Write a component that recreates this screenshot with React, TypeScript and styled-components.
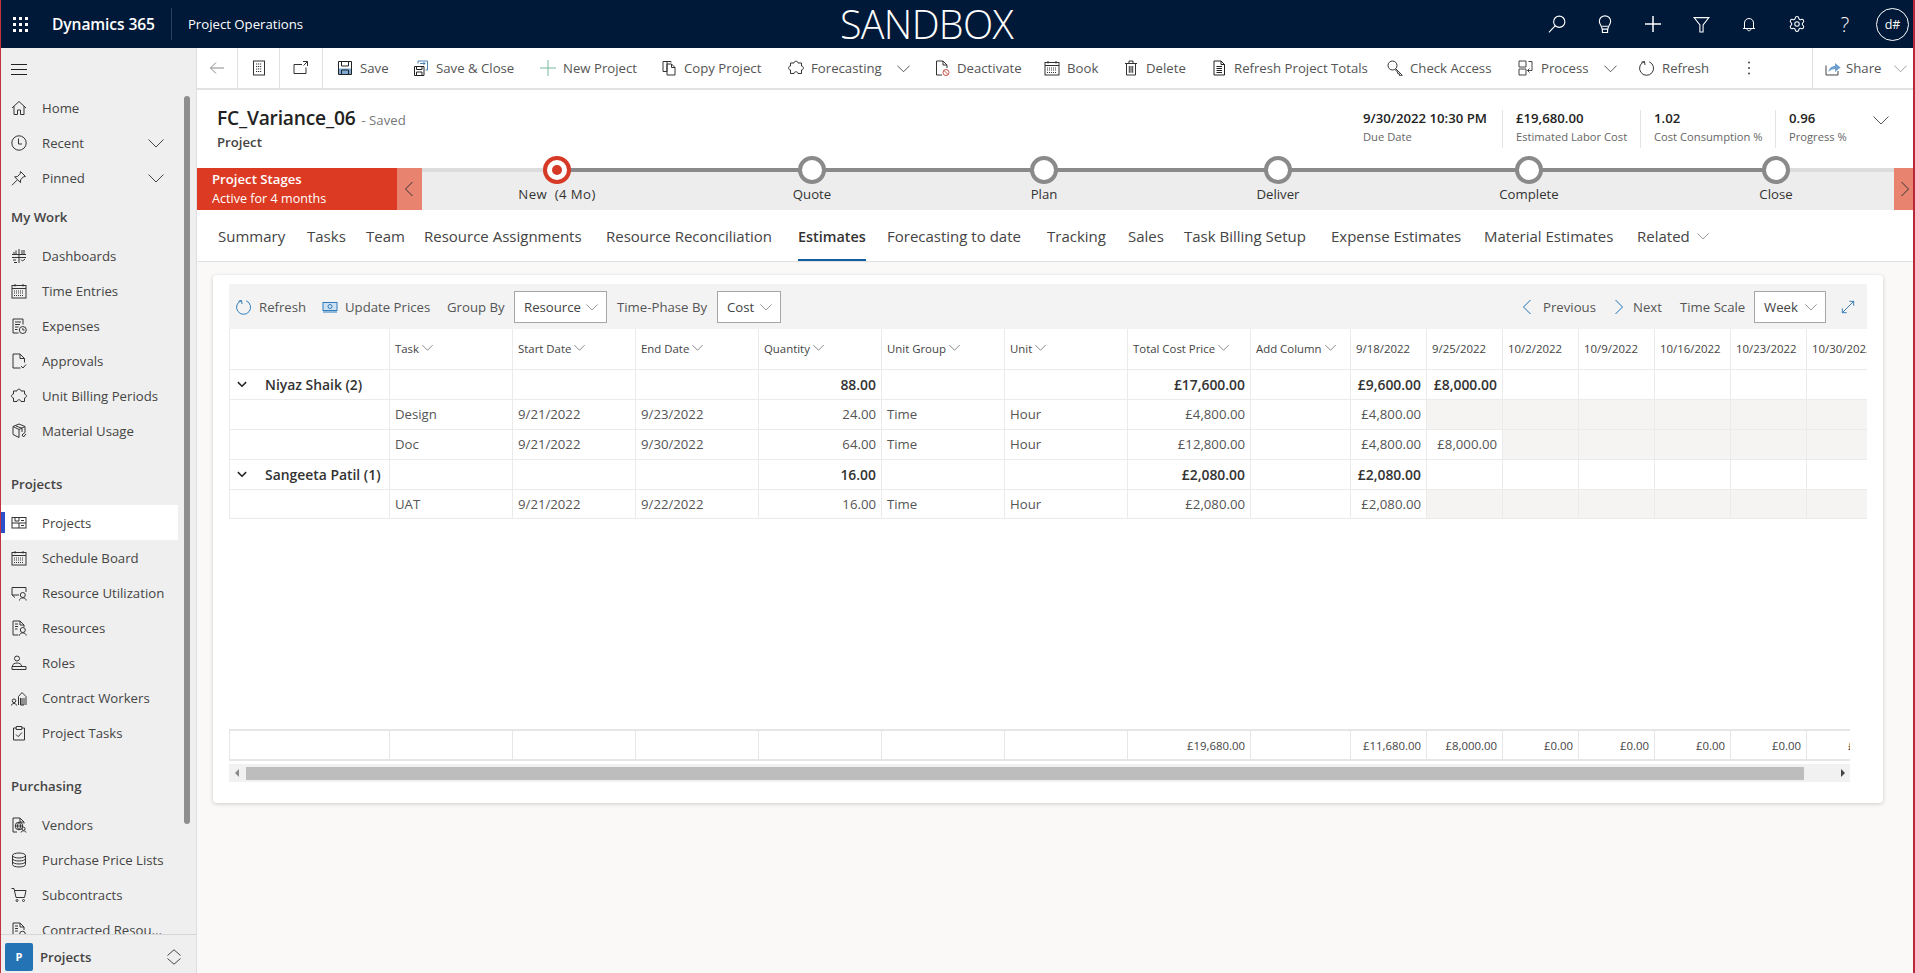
import { ReactNode } from 'react'
import { createGlobalStyle, styled } from 'styled-components'
import { Settings } from 'lucide-react'

const GlobalStyle = createGlobalStyle`
  html, body {
    margin: 0;
    padding: 0;
    height: 100%;
    overflow: hidden;
    background: #faf9f8;
    font-family: "Open Sans", "Noto Sans", "Liberation Sans", sans-serif;
    font-size: 13.2px;
    color: #333;
  }
  * { box-sizing: border-box; }
`

const Frame = styled.div`
  display: flex;
  flex-direction: column;
  width: 1915px;
  height: 973px;
  border-left: 1px solid #c4313f;
  border-right: 2px solid #b8283a;
  overflow: hidden;
`

const Svg = styled.svg<{ $size?: number; $color?: string }>`
  width: ${(p) => p.$size ?? 16}px;
  height: ${(p) => p.$size ?? 16}px;
  flex: none;
  fill: none;
  stroke: ${(p) => p.$color ?? 'currentColor'};
  stroke-width: 1;
`

const icons: Record<string, ReactNode> = {
  home: <path d="M1 8 8 1.5 15 8M3 6.3V14.5H6.5V10H9.5V14.5H13V6.3" />,
  clock: (
    <>
      <circle cx="8" cy="8" r="7.2" />
      <path d="M7.5 3.5V9H11" />
    </>
  ),
  pin: <path d="M9.5 1.5 14.5 6.5 12.3 6.9 9.6 9.8 9.5 12.6 3.6 6.9 6.4 6.6 9.2 3.7ZM6 10.2 1 15.2" />,
  dash: <path d="M8 1V15M1 6.5H15M1 9.5H15M3 6V4M5 6V2.5M10 3H14M10 5H14M2 12H5M3 14.5H6M10 11.5 11.5 13 14 11" />,
  calendar: (
    <>
      <rect x="1" y="2.5" width="14" height="12.5" />
      <path d="M1 5.5H15M4 1V3.5M12 1V3.5" />
      <path d="M3 8H13M3 10H13M3 12.5H13" strokeDasharray="1 1" />
    </>
  ),
  expenses: (
    <>
      <path d="M12 6.5V1H2V15H7.5M4 4H10M4 6.5H9M4 9H7.5M4 11.5H6.5" />
      <circle cx="11.8" cy="12" r="3.5" />
      <path d="M11.8 10.2V12H13.6" />
    </>
  ),
  approvals: <path d="M9 1H2V15H9.5M9 1 13.5 5.5V9.5M9 1V5.5H13.5M10 13 12 15 15 11.5" />,
  puzzle: (
    <path d="M6 3C6 .6 10 .6 10 3H13.5V6C16 6 16 10 13.5 10V13.5H10C10 11.2 6 11.2 6 13.5H2.5V10C0 10 0 6 2.5 6V3Z" />
  ),
  box: <path d="M8 1 14 3.5V9.5L11 12M8 1 2 3.5V11.5L8 14.5V6.5L2 3.5M8 6.5 14 3.5M5 3 11 5.3V9M11 12 12.5 14 15 11" />,
  projects: (
    <>
      <rect x="1" y="2.5" width="14" height="10.5" />
      <path d="M4 2.5V6H8V2.5M1 8H8V13M8 8H15M10 5.5H13M10 10.5H13" />
    </>
  ),
  utilization: (
    <>
      <path d="M15 7V2.5H1V10H8M1 10 4 12.5" />
      <circle cx="11.8" cy="10" r="2.5" />
      <path d="M8.5 15.5C8.5 12 15.2 12 15.2 15.5" />
    </>
  ),
  resources: (
    <>
      <path d="M9 1H2V15H7.5M9 1 13 5V7M9 1V5H13M4 4H7M4 6.5H7M4 9H6.5" />
      <circle cx="11.8" cy="10" r="2.5" />
      <path d="M8.5 15.5C8.5 12 15.2 12 15.2 15.5" />
    </>
  ),
  roles: (
    <>
      <circle cx="6" cy="3.5" r="2.5" />
      <path d="M1.5 11C1.5 7 10.5 7 10.5 11M1 11.5H15V14.5H1Z" />
    </>
  ),
  workers: (
    <>
      <circle cx="3" cy="10.8" r="1.8" />
      <path d="M.5 15.5C.5 12.8 5.5 12.8 5.5 15.5M7.5 15V6.5L11 2.5 15 6.5V15M9.5 8V15H13V8M11 8V15" />
    </>
  ),
  clipboard: (
    <>
      <path d="M5 3H2.5V15H13.5V3H11" />
      <path d="M5.2 1.5H10.8V4.5H5.2ZM5 9.5 7.2 11.7 11 7.5" />
    </>
  ),
  vendors: (
    <>
      <path d="M9 1H2V15H6M9 1 13 5V6.5M9 1V5H13" />
      <circle cx="8" cy="9" r="3.8" />
      <path d="M4.2 9H11.8M8 5.2C6 7.5 6 10.5 8 12.8M8 5.2C10 7.5 10 10.5 8 12.8" />
      <circle cx="12.5" cy="11.8" r="1.6" />
      <path d="M10 15.5C10 13.3 15 13.3 15 15.5" />
    </>
  ),
  stack: (
    <>
      <ellipse cx="8" cy="3.5" rx="6.5" ry="2.5" />
      <path d="M1.5 3.5V12.5C1.5 15.8 14.5 15.8 14.5 12.5V3.5M1.5 6.5C1.5 9.8 14.5 9.8 14.5 6.5M1.5 9.5C1.5 12.8 14.5 12.8 14.5 9.5" />
    </>
  ),
  cart: (
    <>
      <path d="M.5 1.5H3L5 10.5H13.5L15 3.5H3.5" />
      <circle cx="6" cy="13.5" r="1" />
      <circle cx="12.5" cy="13.5" r="1" />
    </>
  ),
  contracted: (
    <>
      <path d="M9 1H2V15H8M9 1 13 5V8M9 1V5H13M4 4H7M4 6.5H7M4 9H7" />
      <circle cx="11.5" cy="12" r="2.8" />
    </>
  ),
  back: <path d="M15 8H1.5M7 2.5 1.5 8 7 13.5" />,
  form: (
    <>
      <rect x="2.5" y="1" width="11" height="14" />
      <path d="M5 4H11M5 6.5H11M5 9H11M5 11.5H11" strokeDasharray="1.2 .8" />
    </>
  ),
  popout: <path d="M9 4.5H1V13.5H13V7.5M10 1.5H14.5V6M14.5 1.5 10.5 5.5" />,
  saveDisk: (
    <>
      <path d="M2 8.5H14V15H2Z" fill="#7ba9d4" stroke="none" />
      <path d="M1.5 1.5H14.5V14.5H1.5ZM4.5 1.5V6H11.5V1.5M4.5 14.5V10H11.5V14.5" stroke="#222" />
    </>
  ),
  saveClose: (
    <>
      <path d="M1.5 6.5H11V15.5H1.5ZM3.5 6.5V9.5H9V6.5M3.5 15.5V12H9V15.5" stroke="#222" />
      <path d="M5 3.5V1H14.5V10H12.5M7 3.5H12M10.5 2 12 3.5 10.5 5" stroke="#4a7fb5" />
    </>
  ),
  plus: <path d="M8 0V16M0 8H16" stroke="#7bb69d" />,
  copy: (
    <>
      <path d="M5 1.5H10L10 2.5M2 1.5H6V11.5H2ZM6 4H10.5L14 7.5V15H6ZM10.5 4V7.5H14" />
    </>
  ),
  deactivate: (
    <>
      <path d="M9 1H2.5V15H8M9 1 13 5V8M9 1V5H13" />
      <circle cx="12" cy="12.5" r="3" stroke="#c8504a" />
      <path d="M10 10.5 14 14.5" stroke="#c8504a" />
    </>
  ),
  trash: <path d="M2 3.5H14M6 3.5V1H10V3.5M3.5 3.5V15H12.5V3.5M6.3 6V12.8M8 6V12.8M9.7 6V12.8" />,
  totals: (
    <path d="M3 1H10L13.5 4.5V15H3ZM10 1V4.5H13.5M5.5 6.5H11M5.5 8.5H11M5.5 10.5H11M5.5 12.5H11" stroke="#222" />
  ),
  key: (
    <>
      <circle cx="5.5" cy="5.5" r="4.5" />
      <path d="M4 4.5H4.1M8.7 8.7 15 15V16L12.5 15.5 12.3 13.8 10.7 13.5 10.5 12 8 9.5" />
    </>
  ),
  process: (
    <path d="M1 1H8V7H1ZM1 9H8V15H1ZM10.5 1.5H14V10.5H9.5M11.5 8.5 9.5 10.5 11.5 12.5" stroke="#444" />
  ),
  refresh: <path d="M10.2 1.8A7 7 0 1 1 5.5 1.6M5.5 1.6 6 5M5.5 1.6 2.5 2.2" />,
  share: (
    <>
      <path d="M1 5.5V15H13V11" stroke="#444" />
      <path d="M3.5 12C4 8 7 6 10 6V3L15.5 7.5 10 12V9C7.5 9 5 10 3.5 12Z" fill="#6e9fd0" stroke="none" />
    </>
  ),
  search: (
    <>
      <circle cx="10" cy="6" r="5" />
      <path d="M6.5 9.5 .8 15.5" />
    </>
  ),
  bulb: <path d="M5.5 12.5C5 9 3 8.5 3 5.5 3 2.5 5.5 .8 8 .8S13 2.5 13 5.5C13 8.5 11 9 10.5 12.5ZM5.5 10H10.5M5.7 12.5V15.5H10.3V12.5" />,
  addWhite: <path d="M8 0V16M0 8H16" strokeWidth="1.5" />,
  filter: <path d="M1 1.5H15L9.5 8.5V15H6.5V8.5Z" />,
  bell: <path d="M3.5 12.5V7C3.5 1 12.5 1 12.5 7V12.5ZM2 12.5H14M6 12.5C6 15.5 10 15.5 10 12.5" />,
  money: (
    <>
      <rect x="1" y="3.5" width="14" height="8" fill="#cfe2f3" stroke="#2f7dbc" />
      <circle cx="8" cy="7.5" r="2" stroke="#2f7dbc" />
      <path d="M1 13H15" stroke="#2f7dbc" />
    </>
  ),
  expand: <path d="M14.5 1.5 1.5 14.5M9.5 1.5H14.5V6.5M1.5 9.5V14.5H6.5" />,
  prev: <path d="M10.5 1 3.5 8 10.5 15" />,
  next: <path d="M5.5 1 12.5 8 5.5 15" />,
  down: <path d="M.5 4.5 8 12 15.5 4.5" />,
  boldDown: <path d="M2.5 5.5 8 11 13.5 5.5" strokeWidth="2" />,
  upDown: <path d="M1.5 6.5 8 .8 14.5 6.5M1.5 9.5 8 15.2 14.5 9.5" />,
}

type TIconProps = { name: string; size?: number; color?: string }

const Icon = ({ name, size, color }: TIconProps) => (
  <Svg viewBox="0 0 16 16" $size={size} $color={color}>
    {icons[name]}
  </Svg>
)

/* top bar */
const TopBar = styled.header`
  display: grid;
  grid-template-columns: 839px auto 1fr;
  align-items: center;
  flex: none;
  height: 48px;
  background: #011938;
  color: #fff;
`

const Brand = styled.div`
  display: flex;
  align-items: center;
  height: 100%;
`

const Waffle = styled.div`
  display: grid;
  grid-template-columns: repeat(3, 3px);
  grid-auto-rows: 3px;
  gap: 3px;
  margin: 0 24px 0 12px;
  i {
    background: #fff;
  }
`

const AppName = styled.div`
  font-size: 15.6px;
  font-weight: 600;
  letter-spacing: -0.1px;
  padding-right: 16px;
  border-right: 1px solid #2c3f5c;
  line-height: 32px;
`

const AreaName = styled.div`
  padding-left: 16px;
  font-size: 13.2px;
`

const Env = styled.div`
  font-size: 39.5px;
  font-weight: 300;
  line-height: 48px;
  letter-spacing: -0.7px;
`

const TopActions = styled.div`
  display: flex;
  justify-content: flex-end;
  align-items: center;
`

const TopAction = styled.div`
  display: flex;
  align-items: center;
  justify-content: center;
  width: 48px;
  height: 48px;
  font-size: 20px;
  font-weight: 300;
`

const Avatar = styled.div`
  display: flex;
  align-items: center;
  justify-content: center;
  width: 33px;
  height: 33px;
  margin: 0 4px 0 7px;
  border: 1px solid #fff;
  border-radius: 50%;
  font-size: 12.5px;
`

/* left nav */
const Body = styled.div`
  display: flex;
  flex: 1;
  min-height: 0;
`

const Side = styled.aside`
  position: relative;
  display: flex;
  flex-direction: column;
  flex: none;
  width: 196px;
  background: #efefef;
  border-right: 1px solid #dedede;
`

const Burger = styled.div`
  display: flex;
  flex-direction: column;
  justify-content: center;
  gap: 4px;
  flex: none;
  height: 42px;
  padding-left: 10px;
  i {
    width: 16px;
    height: 1px;
    background: #222;
  }
`

const NavList = styled.nav`
  flex: 1;
  min-height: 0;
  overflow: hidden;
`

const NavHead = styled.div<{ $first?: boolean }>`
  display: flex;
  align-items: center;
  height: 43px;
  margin-top: ${(p) => (p.$first ? 0 : 14)}px;
  padding-left: 10px;
  font-weight: 600;
  color: #444;
`

const NavItem = styled.div<{ $active?: boolean }>`
  position: relative;
  display: flex;
  align-items: center;
  gap: 15px;
  width: 177px;
  height: 35px;
  padding: 0 14px 0 10px;
  color: #444;
  white-space: nowrap;
  background: ${(p) => (p.$active ? '#fff' : 'transparent')};
  svg:first-child {
    color: #333;
  }
  &::before {
    content: '';
    display: ${(p) => (p.$active ? 'block' : 'none')};
    position: absolute;
    left: 0;
    top: 7px;
    width: 4px;
    height: 21px;
    background: #2b50cc;
  }
`

const NavLabel = styled.span`
  flex: 1;
`

const NavThumb = styled.div`
  position: absolute;
  left: 183px;
  top: 48px;
  width: 6px;
  height: 728px;
  border-radius: 3px;
  background: #8e8e8e;
`

const AreaSwitch = styled.div`
  display: flex;
  align-items: center;
  flex: none;
  height: 39px;
  padding: 5px 14px 0 4px;
  background: #efefef;
  border-top: 1px solid #d6d6d6;
  font-weight: 600;
  color: #444;
`

const AreaTile = styled.div`
  display: flex;
  align-items: center;
  justify-content: center;
  width: 28px;
  height: 28px;
  margin-right: 7px;
  border-radius: 2px;
  background: #2473b5;
  color: #fff;
  font-size: 11px;
  font-weight: 700;
`

/* command bar */
const Main = styled.main`
  display: flex;
  flex-direction: column;
  flex: 1;
  min-width: 0;
  background: #fff;
`

const CommandBar = styled.div`
  display: flex;
  align-items: stretch;
  flex: none;
  height: 42px;
  border-bottom: 2px solid #e2e2e2;
  color: #555;
`

const NavButton = styled.div<{ $w: number }>`
  display: flex;
  align-items: center;
  justify-content: center;
  width: ${(p) => p.$w}px;
  border-right: 1px solid #e0e0e0;
`

const Commands = styled.div`
  display: flex;
  align-items: center;
  flex: 1;
  padding-left: 14px;
`

const Command = styled.div<{ $w: number }>`
  display: flex;
  align-items: center;
  gap: 7px;
  width: ${(p) => p.$w}px;
  white-space: nowrap;
  svg:first-child {
    color: #333;
  }
`

const SmallChevron = styled.span`
  display: flex;
  margin-left: 8px;
  color: #8a8a8a;
`

const ShareBox = styled.div`
  display: flex;
  align-items: center;
  gap: 5px;
  width: 101px;
  padding-left: 12px;
  border-left: 1px solid #e0e0e0;
`

/* form header */
const FormHead = styled.div`
  display: flex;
  justify-content: space-between;
  flex: none;
  height: 78px;
  padding: 14px 24px 0 20px;
`

const TitleLine = styled.div`
  display: flex;
  align-items: baseline;
  gap: 6px;
  line-height: 27px;
`

const Title = styled.span`
  font-size: 19.2px;
  font-weight: 600;
  letter-spacing: -0.2px;
  color: #222;
`

const Saved = styled.span`
  color: #777;
`

const EntityName = styled.div`
  font-weight: 600;
  line-height: 17px;
  color: #444;
`

const Fields = styled.div`
  display: flex;
  margin-top: 6px;
  height: 38px;
`

const Field = styled.div<{ $w: number; $divided?: boolean }>`
  width: ${(p) => p.$w}px;
  padding-left: ${(p) => (p.$divided ? 13 : 0)}px;
  border-left: ${(p) => (p.$divided ? '1px solid #e4e4e4' : 'none')};
`

const FieldValue = styled.div`
  font-weight: 600;
  line-height: 17px;
  color: #222;
`

const FieldLabel = styled.div`
  font-size: 11.2px;
  line-height: 20px;
  color: #666;
`

const HeadChevron = styled.div`
  display: flex;
  padding-top: 2px;
  color: #555;
`

/* stages */
const StageBar = styled.div`
  display: flex;
  flex: none;
  height: 42px;
  background: #ededed;
`

const StageTitle = styled.div`
  flex: none;
  width: 200px;
  padding: 2px 0 0 15px;
  background: #dc3a22;
  color: #fff;
  line-height: 19px;
`

const StageName = styled.div`
  font-weight: 600;
`

const StageSince = styled.div`
  font-size: 12.6px;
`

const StageArrow = styled.div<{ $w: number }>`
  display: flex;
  align-items: center;
  justify-content: center;
  flex: none;
  width: ${(p) => p.$w}px;
  background: #e8836f;
  color: #333;
`

const Stage = styled.div<{ $w: number; $left: string; $right: string }>`
  position: relative;
  display: flex;
  flex-direction: column;
  align-items: center;
  flex: none;
  width: ${(p) => p.$w}px;
  &::before {
    content: '';
    position: absolute;
    inset: 0 0 auto 0;
    height: 4px;
    background: linear-gradient(to right, ${(p) => p.$left} 50%, ${(p) => p.$right} 50%);
  }
`

const StageDot = styled.div<{ $active?: boolean }>`
  position: relative;
  display: flex;
  align-items: center;
  justify-content: center;
  width: 28px;
  height: 28px;
  margin-top: -12px;
  border: 4px solid ${(p) => (p.$active ? '#d63a27' : '#8a8a8a')};
  border-radius: 50%;
  background: #fff;
  &::after {
    content: '';
    display: ${(p) => (p.$active ? 'block' : 'none')};
    width: 10px;
    height: 10px;
    border-radius: 50%;
    background: #d63a27;
  }
`

const StageLabel = styled.div<{ $active?: boolean }>`
  margin-top: 1px;
  line-height: 18px;
  white-space: pre;
  letter-spacing: ${(p) => (p.$active ? 0.4 : 0)}px;
  color: #333;
`

/* tabs */
const TabBar = styled.div`
  display: flex;
  flex: none;
  height: 52px;
  padding-left: 21px;
  border-bottom: 1px solid #e0e0e0;
`

const Tab = styled.div<{ $w: number }>`
  display: flex;
  align-items: center;
  gap: 7px;
  flex: none;
  width: ${(p) => p.$w}px;
`

const TabLabel = styled.span<{ $active?: boolean }>`
  display: flex;
  align-items: center;
  height: 100%;
  padding-top: 3px;
  border-bottom: 2px solid ${(p) => (p.$active ? '#115ea3' : 'transparent')};
  font-size: ${(p) => (p.$active ? 14.4 : 15)}px;
  font-weight: ${(p) => (p.$active ? 600 : 400)};
  white-space: nowrap;
  color: ${(p) => (p.$active ? '#333' : '#444')};
`

/* estimates card */
const Content = styled.div`
  flex: 1;
  min-height: 0;
  padding: 13px 30px 0 16px;
  background: #faf9f8;
`

const Card = styled.section`
  display: flex;
  flex-direction: column;
  height: 528px;
  padding: 9px 16px 21px;
  background: #fff;
  border-radius: 4px;
  box-shadow: 0 1px 4px rgba(0, 0, 0, 0.18);
`

const Toolbar = styled.div`
  display: flex;
  align-items: center;
  justify-content: space-between;
  flex: none;
  height: 45px;
  padding: 0 12px 0 7px;
  background: #f3f3f3;
  color: #555;
`

const ToolGroup = styled.div`
  display: flex;
  align-items: center;
`

const ToolItem = styled.div<{ $w: number }>`
  display: flex;
  align-items: center;
  gap: 7px;
  width: ${(p) => p.$w}px;
  white-space: nowrap;
`

const Picker = styled.div<{ $w: number; $after?: number }>`
  display: flex;
  align-items: center;
  justify-content: space-between;
  width: ${(p) => p.$w}px;
  height: 32px;
  margin-right: ${(p) => p.$after ?? 0}px;
  padding: 0 8px 0 9px;
  background: #fff;
  border: 1px solid #a6a6a6;
  color: #444;
`

const GridView = styled.div<{ $w: number }>`
  width: ${(p) => p.$w}px;
  overflow: hidden;
`

const Table = styled.table`
  width: 1653px;
  table-layout: fixed;
  border-collapse: collapse;
`

const Th = styled.th`
  height: 40px;
  padding: 0 5px;
  border: solid #ebebeb;
  border-width: 0 1px 1px;
  font-size: 11.4px;
  font-weight: 400;
  text-align: left;
  white-space: nowrap;
  overflow: hidden;
  color: #444;
`

const Td = styled.td<{ $bold?: boolean; $right?: boolean; $shade?: boolean }>`
  height: 30px;
  padding: 0 5px;
  border: 1px solid #ebebeb;
  font-size: ${(p) => (p.$bold ? 13.9 : 13.2)}px;
  font-weight: ${(p) => (p.$bold ? 600 : 400)};
  text-align: ${(p) => (p.$right ? 'right' : 'left')};
  background: ${(p) => (p.$shade ? '#f5f4f3' : 'transparent')};
  color: ${(p) => (p.$bold ? '#333' : '#555')};
  white-space: nowrap;
  overflow: hidden;
  tr:last-child > & {
    height: 29px;
  }
`

const GroupName = styled.div`
  display: flex;
  align-items: center;
  gap: 17px;
  padding-left: 1px;
  font-size: 13.9px;
  font-weight: 600;
  color: #333;
`

const Spacer = styled.div`
  flex: 1;
`

const FootCell = styled.td`
  height: 30px;
  padding: 0 5px;
  border: solid #e6e6e6;
  border-width: 2px 1px;
  font-size: 11.4px;
  text-align: right;
  white-space: nowrap;
  overflow: hidden;
  color: #444;
`

const HScroll = styled.div`
  display: flex;
  align-items: center;
  width: 1621px;
  height: 18px;
  margin-top: 3px;
  background: #f1f1f1;
  color: #555;
`

const HThumb = styled.div`
  width: 1558px;
  height: 13px;
  margin: 0 auto 0 7px;
  background: #bdbdbd;
`

const ScrollTip = styled.span<{ $dir: 'left' | 'right' }>`
  width: 0;
  height: 0;
  margin: ${(p) => (p.$dir === 'left' ? '0 0 0 6px' : '0 5px 0 0')};
  border: 4px solid transparent;
  border-left-width: ${(p) => (p.$dir === 'right' ? 4 : 0)}px;
  border-right-width: ${(p) => (p.$dir === 'left' ? 4 : 0)}px;
  border-left-color: #444;
  border-right-color: #888;
`

const navSections = [
  {
    title: 'My Work',
    items: [
      ['dash', 'Dashboards'],
      ['calendar', 'Time Entries'],
      ['expenses', 'Expenses'],
      ['approvals', 'Approvals'],
      ['puzzle', 'Unit Billing Periods'],
      ['box', 'Material Usage'],
    ],
  },
  {
    title: 'Projects',
    items: [
      ['projects', 'Projects'],
      ['calendar', 'Schedule Board'],
      ['utilization', 'Resource Utilization'],
      ['resources', 'Resources'],
      ['roles', 'Roles'],
      ['workers', 'Contract Workers'],
      ['clipboard', 'Project Tasks'],
    ],
  },
  {
    title: 'Purchasing',
    items: [
      ['vendors', 'Vendors'],
      ['stack', 'Purchase Price Lists'],
      ['cart', 'Subcontracts'],
      ['contracted', 'Contracted Resou...'],
    ],
  },
]

const commands = [
  { icon: 'saveDisk', label: 'Save', w: 76 },
  { icon: 'saveClose', label: 'Save & Close', w: 127 },
  { icon: 'plus', label: 'New Project', w: 121 },
  { icon: 'copy', label: 'Copy Project', w: 127 },
  { icon: 'puzzle', label: 'Forecasting', w: 146, more: true },
  { icon: 'deactivate', label: 'Deactivate', w: 110 },
  { icon: 'calendar', label: 'Book', w: 79 },
  { icon: 'trash', label: 'Delete', w: 88 },
  { icon: 'totals', label: 'Refresh Project Totals', w: 176 },
  { icon: 'key', label: 'Check Access', w: 131 },
  { icon: 'process', label: 'Process', w: 121, more: true },
  { icon: 'refresh', label: 'Refresh', w: 102 },
]

const headFields = [
  { value: '9/30/2022 10:30 PM', label: 'Due Date', w: 139 },
  { value: '£19,680.00', label: 'Estimated Labor Cost', w: 138 },
  { value: '1.02', label: 'Cost Consumption %', w: 135 },
  { value: '0.96', label: 'Progress %', w: 98 },
]

const LIGHT = '#dcdcdc'
const DARK = '#8a8a8a'

const stages = [
  { label: 'New  (4 Mo)', w: 270, left: LIGHT, right: DARK, active: true },
  { label: 'Quote', w: 240, left: DARK, right: DARK },
  { label: 'Plan', w: 224, left: DARK, right: DARK },
  { label: 'Deliver', w: 244, left: DARK, right: DARK },
  { label: 'Complete', w: 258, left: DARK, right: DARK },
  { label: 'Close', w: 236, left: DARK, right: LIGHT },
]

const tabs = [
  { label: 'Summary', w: 89 },
  { label: 'Tasks', w: 59 },
  { label: 'Team', w: 58 },
  { label: 'Resource Assignments', w: 182 },
  { label: 'Resource Reconciliation', w: 192 },
  { label: 'Estimates', w: 89, active: true },
  { label: 'Forecasting to date', w: 160 },
  { label: 'Tracking', w: 81 },
  { label: 'Sales', w: 56 },
  { label: 'Task Billing Setup', w: 147 },
  { label: 'Expense Estimates', w: 153 },
  { label: 'Material Estimates', w: 153 },
]

const columnWidths = [160, 123, 123, 123, 123, 123, 123, 123, 100, 76, 76, 76, 76, 76, 76, 76]
const sortable = ['Task', 'Start Date', 'End Date', 'Quantity', 'Unit Group', 'Unit', 'Total Cost Price', 'Add Column']
const dates = ['9/18/2022', '9/25/2022', '10/2/2022', '10/9/2022', '10/16/2022', '10/23/2022', '10/30/2022']

type TRow = {
  group?: string
  cells: string[]
  week: string[]
}

const rows: TRow[] = [
  { group: 'Niyaz Shaik (2)', cells: ['', '', '', '88.00', '', '', '£17,600.00', ''], week: ['£9,600.00', '£8,000.00'] },
  { cells: ['Design', '9/21/2022', '9/23/2022', '24.00', 'Time', 'Hour', '£4,800.00', ''], week: ['£4,800.00'] },
  { cells: ['Doc', '9/21/2022', '9/30/2022', '64.00', 'Time', 'Hour', '£12,800.00', ''], week: ['£4,800.00', '£8,000.00'] },
  { group: 'Sangeeta Patil (1)', cells: ['', '', '', '16.00', '', '', '£2,080.00', ''], week: ['£2,080.00'] },
  { cells: ['UAT', '9/21/2022', '9/22/2022', '16.00', 'Time', 'Hour', '£2,080.00', ''], week: ['£2,080.00'] },
]

const footerValues = ['', '', '', '', '', '', '', '£19,680.00', '', '£11,680.00', '£8,000.00', '£0.00', '£0.00', '£0.00', '£0.00', '£0.00']

const Columns = () => (
  <colgroup>
    {columnWidths.map((w, i) => (
      <col key={i} style={{ width: w }} />
    ))}
  </colgroup>
)

export default function App() {
  return (
    <Frame>
      <GlobalStyle />
      <TopBar>
        <Brand>
          <Waffle>
            {Array.from({ length: 9 }).map((_, i) => (
              <i key={i} />
            ))}
          </Waffle>
          <AppName>Dynamics 365</AppName>
          <AreaName>Project Operations</AreaName>
        </Brand>
        <Env>SANDBOX</Env>
        <TopActions>
          <TopAction>
            <Icon name="search" size={18} />
          </TopAction>
          <TopAction>
            <Icon name="bulb" size={18} />
          </TopAction>
          <TopAction>
            <Icon name="addWhite" />
          </TopAction>
          <TopAction>
            <Icon name="filter" size={17} />
          </TopAction>
          <TopAction>
            <Icon name="bell" />
          </TopAction>
          <TopAction>
            <Settings size={18} strokeWidth={1.4} color="#ffffff" />
          </TopAction>
          <TopAction>?</TopAction>
          <Avatar>d#</Avatar>
        </TopActions>
      </TopBar>

      <Body>
        <Side>
          <Burger>
            <i />
            <i />
            <i />
          </Burger>
          <NavList>
            <NavItem>
              <Icon name="home" />
              <NavLabel>Home</NavLabel>
            </NavItem>
            <NavItem>
              <Icon name="clock" />
              <NavLabel>Recent</NavLabel>
              <Icon name="down" />
            </NavItem>
            <NavItem>
              <Icon name="pin" />
              <NavLabel>Pinned</NavLabel>
              <Icon name="down" />
            </NavItem>
            {navSections.map((section, s) => (
              <div key={section.title}>
                <NavHead $first={s === 0}>{section.title}</NavHead>
                {section.items.map(([icon, label]) => (
                  <NavItem key={label} $active={s === 1 && label === 'Projects'}>
                    <Icon name={icon} />
                    <NavLabel>{label}</NavLabel>
                  </NavItem>
                ))}
              </div>
            ))}
          </NavList>
          <NavThumb />
          <AreaSwitch>
            <AreaTile>P</AreaTile>
            <NavLabel>Projects</NavLabel>
            <Icon name="upDown" />
          </AreaSwitch>
        </Side>

        <Main>
          <CommandBar>
            <NavButton $w={41}>
              <Icon name="back" color="#8a8a8a" />
            </NavButton>
            <NavButton $w={42}>
              <Icon name="form" color="#333" />
            </NavButton>
            <NavButton $w={43}>
              <Icon name="popout" color="#333" />
            </NavButton>
            <Commands>
              {commands.map((c) => (
                <Command key={c.label} $w={c.w}>
                  <Icon name={c.icon} />
                  {c.label}
                  {c.more && (
                    <SmallChevron>
                      <Icon name="down" size={13} />
                    </SmallChevron>
                  )}
                </Command>
              ))}
              <Command $w={16}>
                <Svg viewBox="0 0 16 16">
                  <circle cx="8" cy="2.5" r="1" fill="#444" stroke="none" />
                  <circle cx="8" cy="8" r="1" fill="#444" stroke="none" />
                  <circle cx="8" cy="13.5" r="1" fill="#444" stroke="none" />
                </Svg>
              </Command>
            </Commands>
            <ShareBox>
              <Icon name="share" />
              Share
              <SmallChevron>
                <Icon name="down" size={13} />
              </SmallChevron>
            </ShareBox>
          </CommandBar>

          <FormHead>
            <div>
              <TitleLine>
                <Title>FC_Variance_06</Title>
                <Saved>- Saved</Saved>
              </TitleLine>
              <EntityName>Project</EntityName>
            </div>
            <Fields>
              {headFields.map((f, i) => (
                <Field key={f.label} $w={f.w} $divided={i > 0}>
                  <FieldValue>{f.value}</FieldValue>
                  <FieldLabel>{f.label}</FieldLabel>
                </Field>
              ))}
              <HeadChevron>
                <Icon name="down" />
              </HeadChevron>
            </Fields>
          </FormHead>

          <StageBar>
            <StageTitle>
              <StageName>Project Stages</StageName>
              <StageSince>Active for 4 months</StageSince>
            </StageTitle>
            <StageArrow $w={25}>
              <Icon name="prev" size={16} />
            </StageArrow>
            {stages.map((s) => (
              <Stage key={s.label} $w={s.w} $left={s.left} $right={s.right}>
                <StageDot $active={s.active} />
                <StageLabel $active={s.active}>{s.label}</StageLabel>
              </Stage>
            ))}
            <StageArrow $w={19}>
              <Icon name="next" size={16} />
            </StageArrow>
          </StageBar>

          <TabBar>
            {tabs.map((t) => (
              <Tab key={t.label} $w={t.w}>
                <TabLabel $active={t.active}>{t.label}</TabLabel>
              </Tab>
            ))}
            <Tab $w={90}>
              <TabLabel>Related</TabLabel>
              <Icon name="down" size={12} color="#777" />
            </Tab>
          </TabBar>

          <Content>
            <Card>
              <Toolbar>
                <ToolGroup>
                  <ToolItem $w={86}>
                    <Icon name="refresh" color="#2f7dbc" />
                    Refresh
                  </ToolItem>
                  <ToolItem $w={125}>
                    <Icon name="money" />
                    Update Prices
                  </ToolItem>
                  <ToolItem $w={67}>Group By</ToolItem>
                  <Picker $w={93} $after={10}>
                    Resource
                    <Icon name="down" size={12} color="#777" />
                  </Picker>
                  <ToolItem $w={100}>Time-Phase By</ToolItem>
                  <Picker $w={64}>
                    Cost
                    <Icon name="down" size={12} color="#777" />
                  </Picker>
                </ToolGroup>
                <ToolGroup>
                  <ToolItem $w={90}>
                    <Icon name="prev" color="#1f6fb0" />
                    Previous
                  </ToolItem>
                  <ToolItem $w={70}>
                    <Icon name="next" color="#1f6fb0" />
                    Next
                  </ToolItem>
                  <ToolItem $w={74}>Time Scale</ToolItem>
                  <Picker $w={72} $after={15}>
                    Week
                    <Icon name="down" size={12} color="#777" />
                  </Picker>
                  <Icon name="expand" size={14} color="#1f6fb0" />
                </ToolGroup>
              </Toolbar>

              <GridView $w={1638}>
                <Table>
                  <Columns />
                  <thead>
                    <tr>
                      <Th />
                      {sortable.map((name) => (
                        <Th key={name}>
                          {name} <Icon name="down" size={11} color="#555" />
                        </Th>
                      ))}
                      {dates.map((d) => (
                        <Th key={d}>{d}</Th>
                      ))}
                    </tr>
                  </thead>
                  <tbody>
                    {rows.map((row, r) => (
                      <tr key={r}>
                        <Td>
                          {row.group && (
                            <GroupName>
                              <Icon name="boldDown" size={12} color="#222" />
                              {row.group}
                            </GroupName>
                          )}
                        </Td>
                        {row.cells.map((value, c) => (
                          <Td key={c} $bold={!!row.group} $right={c === 3 || c === 6}>
                            {value}
                          </Td>
                        ))}
                        {dates.map((d, i) => (
                          <Td key={d} $right $bold={!!row.group} $shade={!row.group && !row.week[i]}>
                            {row.week[i]}
                          </Td>
                        ))}
                      </tr>
                    ))}
                  </tbody>
                </Table>
              </GridView>

              <Spacer />

              <GridView $w={1621}>
                <Table>
                  <Columns />
                  <tbody>
                    <tr>
                      {footerValues.map((value, i) => (
                        <FootCell key={i}>{value}</FootCell>
                      ))}
                    </tr>
                  </tbody>
                </Table>
              </GridView>

              <HScroll>
                <ScrollTip $dir="left" />
                <HThumb />
                <ScrollTip $dir="right" />
              </HScroll>
            </Card>
          </Content>
        </Main>
      </Body>
    </Frame>
  )
}
